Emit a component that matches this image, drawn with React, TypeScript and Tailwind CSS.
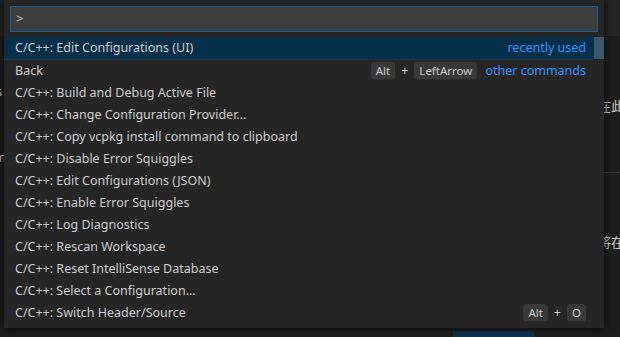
const COMMANDS = [
  "C/C++: Build and Debug Active File",
  "C/C++: Change Configuration Provider...",
  "C/C++: Copy vcpkg install command to clipboard",
  "C/C++: Disable Error Squiggles",
  "C/C++: Edit Configurations (JSON)",
  "C/C++: Enable Error Squiggles",
  "C/C++: Log Diagnostics",
  "C/C++: Rescan Workspace",
  "C/C++: Reset IntelliSense Database",
  "C/C++: Select a Configuration...",
];

function Key({ children }: { children: string }) {
  return (
    <span className="h-[18px] px-[5px] flex items-center rounded-[3px] bg-[#383839] border-b border-[#2c2c2c] text-[11.5px] text-[#cccccc]">
      {children}
    </span>
  );
}

function Keys({ a, b }: { a: string; b: string }) {
  return (
    <div className="flex items-center gap-[6px]">
      <Key>{a}</Key>
      <span className="text-[12.5px] text-[#cccccc]">+</span>
      <Key>{b}</Key>
    </div>
  );
}

export default function App() {
  return (
    <div
      className="relative w-[620px] h-[337px] overflow-hidden bg-[#1e1e1e]"
      style={{ fontFamily: '"Noto Sans", "Noto Sans CJK SC", sans-serif' }}
    >
      {/* editor content behind the picker */}
      <div className="flex flex-col h-full">
        <div className="h-[36px] bg-[#252526]" />
        <div className="flex-1 relative text-[13px] text-[#cccccc]">
          <div className="absolute left-[585px] top-[61px] whitespace-nowrap">请在此</div>
          <div className="absolute left-[604px] top-[136px] w-[16px] h-px bg-[#3c3c3c]" />
          <div className="absolute left-[585px] top-[197px] whitespace-nowrap">会将在</div>
          <div className="absolute left-[-4px] top-[46px]">s</div>
          <div className="absolute left-[-6px] top-[112px]">m</div>
          <div className="absolute left-[453px] bottom-0 w-[81px] h-[6px] bg-[#0b3553]" />
        </div>
      </div>

      {/* quick pick */}
      <div className="absolute left-[4px] top-0 w-[600px] h-[328px] bg-[#252526] shadow-[0_0_8px_2px_rgba(0,0,0,0.55)] flex flex-col text-[12.5px] text-[#cccccc]">
        <div className="px-[6px] pt-[6px] pb-[5px]">
          <div className="h-[26px] bg-[#3c3c3c] border border-[#1d5f91] flex items-center pl-[5px] text-[13px] text-[#cccccc]">
            &gt;
          </div>
        </div>
        <div className="flex">
          <div className="flex-1 h-[22px] bg-[#062f4a] flex items-center pl-[11px] pr-[8px]">
            <span className="flex-1">C/C++: Edit Configurations (UI)</span>
            <span className="text-[#3794ff]">recently used</span>
          </div>
          <div className="w-[10px] h-[22px] bg-[#3f5668]" />
        </div>
        <div className="h-px bg-[#1f3344] mr-[10px]" />
        <div className="h-[22px] flex items-center pl-[11px] pr-[18px]">
          <span className="flex-1">Back</span>
          <Keys a="Alt" b="LeftArrow" />
          <span className="ml-[8px] text-[#3794ff]">other commands</span>
        </div>
        {COMMANDS.map((c) => (
          <div key={c} className="h-[22px] flex items-center pl-[11px]">
            {c}
          </div>
        ))}
        <div className="h-[22px] flex items-center pl-[11px] pr-[18px]">
          <span className="flex-1">C/C++: Switch Header/Source</span>
          <Keys a="Alt" b="O" />
        </div>
      </div>
    </div>
  );
}
